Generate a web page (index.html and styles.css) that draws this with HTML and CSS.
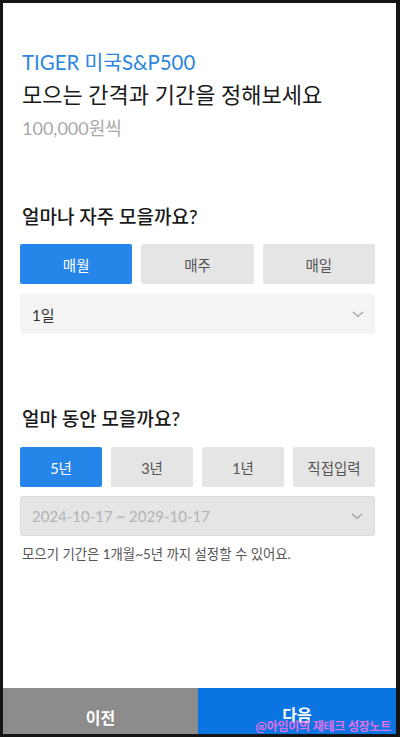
FILE: index.html
```html
<!DOCTYPE html>
<html lang="ko">
<head>
<meta charset="utf-8">
<link rel="stylesheet" href="styles.css">
</head>
<body>
<div class="app">
  <main class="content">
    <div class="product">TIGER 미국S&amp;P500</div>
    <h1 class="headline">모으는 간격과 기간을 정해보세요</h1>
    <div class="amount">100,000원씩</div>

    <h2 class="section-title first">얼마나 자주 모을까요?</h2>
    <div class="options three">
      <button class="opt active">매월</button>
      <button class="opt">매주</button>
      <button class="opt">매일</button>
    </div>
    <div class="select">
      <span>1일</span>
      <svg class="chev" width="12" height="7" viewBox="0 0 12 7"><path d="M1 1l5 4.5L11 1" fill="none" stroke="#a0a0a0" stroke-width="1.3"/></svg>
    </div>

    <h2 class="section-title second">얼마 동안 모을까요?</h2>
    <div class="options four">
      <button class="opt active">5년</button>
      <button class="opt">3년</button>
      <button class="opt">1년</button>
      <button class="opt">직접입력</button>
    </div>
    <div class="select disabled">
      <span>2024-10-17 ~ 2029-10-17</span>
      <svg class="chev" width="12" height="7" viewBox="0 0 12 7"><path d="M1 1l5 4.5L11 1" fill="none" stroke="#a0a0a0" stroke-width="1.3"/></svg>
    </div>
    <p class="note">모으기 기간은 1개월~5년 까지 설정할 수 있어요.</p>
  </main>
  <footer class="bottom">
    <button class="nav prev">이전</button>
    <button class="nav next">다음</button>
    <span class="watermark">@아임이의 재테크 성장노트</span>
  </footer>
</div>
</body>
</html>
```
FILE: styles.css
```css
* { box-sizing: border-box; }
html, body { margin: 0; padding: 0; }
body {
  background: #141414;
  font-family: Lato, "Noto Sans CJK KR", sans-serif;
  width: 400px;
  height: 737px;
  overflow: hidden;
}
.app {
  margin: 3px 4px 3px 3px;
  height: 731px;
  background: #fff;
  display: flex;
  flex-direction: column;
  position: relative;
}
.content {
  flex: 1;
  padding: 46px 21px 0 17px;
  display: flex;
  flex-direction: column;
}
.product {
  font-size: 20.4px;
  line-height: 26px;
  color: #2b86dc;
  padding-left: 2px;
}
.headline {
  margin: 5px 0 0;
  font-size: 22px;
  line-height: 30px;
  font-weight: 400;
  color: #1a1a1a;
  padding-left: 2px;
}
.amount {
  margin-top: 6px;
  font-size: 18px;
  line-height: 24px;
  color: #a9a9a9;
  padding-left: 2px;
}
.section-title {
  margin: 0;
  font-size: 19px;
  line-height: 26px;
  font-weight: 500;
  color: #1a1a1a;
  padding-left: 2px;
}
.section-title.first { margin-top: 64px; }
.section-title.second { margin-top: 72px; }
.options {
  display: grid;
  gap: 9px;
  margin-top: 14px;
}
.options.three { grid-template-columns: repeat(3, 1fr); }
.options.four { grid-template-columns: repeat(4, 1fr); margin-top: 15px; }
.opt {
  height: 40px;
  border: none;
  border-radius: 2px;
  background: #e5e5e5;
  color: #555;
  font-family: inherit;
  font-size: 14.5px;
  padding: 0;
}
.opt.active {
  background: #2585e8;
  color: #fff;
}
.select {
  margin-top: 10px;
  height: 40px;
  border-radius: 3px;
  background: #f4f4f4;
  display: flex;
  align-items: center;
  justify-content: space-between;
  padding: 0 11px 0 12px;
  font-size: 15px;
  color: #333;
}
.select.disabled {
  margin-top: 9px;
  background: #e5e5e5;
  border: 1px solid #dcdcdc;
  color: #b3b3b3;
  padding-left: 11px;
}
.note {
  margin: 9px 0 0;
  font-size: 13.4px;
  line-height: 18px;
  color: #555;
  padding-left: 2px;
}
.bottom {
  height: 46px;
  display: flex;
  position: relative;
}
.nav {
  border: none;
  font-family: inherit;
  font-size: 16px;
  font-weight: 700;
  color: #fff;
  padding: 0;
}
.prev { width: 195px; background: #8c8c8c; padding-top: 12px; }
.next { flex: 1; background: #0a74e0; padding-top: 6px; }
.watermark {
  position: absolute;
  right: 5px;
  bottom: 0;
  font-size: 12px;
  line-height: 16px;
  font-weight: 700;
  color: #e070e8;
  font-family: "Noto Sans CJK KR", sans-serif;
  letter-spacing: -0.3px;
}
```
